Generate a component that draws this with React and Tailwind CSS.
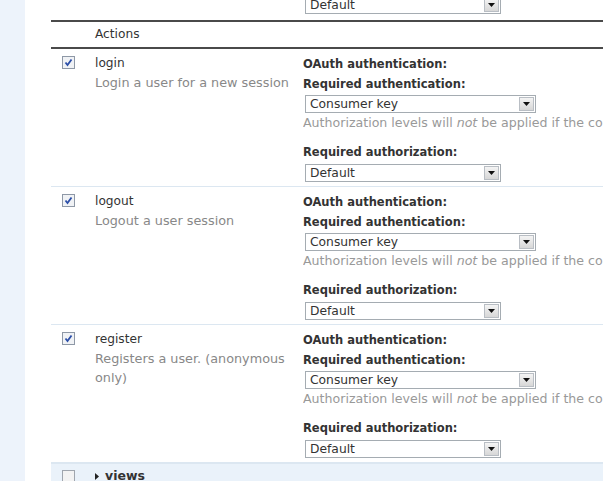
import React from "react";

function Check({ checked }) {
  return (
    <div className="w-[13px] h-[13px] border border-[#8e98a6] bg-[#f0f2f5] flex items-center justify-center">
      {checked && (
        <svg width="9" height="9" viewBox="0 0 9 9">
          <path d="M1.5 4.5 L3.5 7 L7.5 1.5" stroke="#2b4ea8" strokeWidth="1.8" fill="none" />
        </svg>
      )}
    </div>
  );
}

function Select({ value, w }) {
  return (
    <div className={`${w} h-[18px] border border-[#a5acb2] bg-white flex items-center justify-between`}>
      <span className="pl-[4px] text-[12.3px] text-[#333] leading-none">{value}</span>
      <div className="w-[15px] h-[14px] mr-[1px] border border-[#b9bec4] bg-gradient-to-b from-[#f4f4f4] to-[#d7d7d7] flex items-center justify-center">
        <svg width="7" height="4" viewBox="0 0 7 4">
          <path d="M0 0 H7 L3.5 4 Z" fill="#111" />
        </svg>
      </div>
    </div>
  );
}

function Row({ name, desc, last }) {
  return (
    <div className={`flex h-[138px] ${last ? "" : "border-b border-[#dce7f1]"}`}>
      <div className="w-[44px] pl-[11px] pt-[7px]">
        <Check checked />
      </div>
      <div className="w-[208px] pt-[5px]">
        <div className="text-[12.2px] text-[#333] leading-[19px]">{name}</div>
        <div className="text-[12.8px] text-[#888] leading-[19px] w-[205px]">{desc}</div>
      </div>
      <div className="flex-1 pt-[5px] whitespace-nowrap overflow-hidden">
        <div className="text-[11.5px] font-bold text-[#333] leading-[20px]">OAuth authentication:</div>
        <div className="text-[11.5px] font-bold text-[#333] leading-[20px]">Required authentication:</div>
        <div className="mt-[1px] ml-[2px]">
          <Select value="Consumer key" w="w-[231px]" />
        </div>
        <div className="text-[12.6px] text-[#999] leading-[18px] mt-[1px]">
          Authorization levels will <i>not</i> be applied if the consumer
        </div>
        <div className="text-[11.5px] font-bold text-[#333] leading-[20px] mt-[10px]">Required authorization:</div>
        <div className="mt-[2px] ml-[2px]">
          <Select value="Default" w="w-[196px]" />
        </div>
      </div>
    </div>
  );
}

export default function App() {
  return (
    <div
      className="w-[603px] h-[481px] overflow-hidden flex bg-white"
      style={{ fontFamily: '"DejaVu Sans", Verdana, sans-serif' }}
    >
      <div className="w-[25px] bg-[#edf3fb] shrink-0" />
      <div className="flex-1 pl-[26px] overflow-hidden">
        <div className="h-[20px] relative">
          <div className="absolute left-[254px] top-[-4px]">
            <Select value="Default" w="w-[196px]" />
          </div>
        </div>
        <div className="border-t-2 border-b-2 border-[#4a4a4a] h-[29px] flex items-center pl-[44px]">
          <span className="text-[12.2px] text-[#333]">Actions</span>
        </div>
        <Row name="login" desc="Login a user for a new session" />
        <Row name="logout" desc="Logout a user session" />
        <Row name="register" desc="Registers a user. (anonymous only)" />
        <div className="border-t border-[#dce7f1] bg-[#eaf2fa] h-[40px] flex pt-[6px]">
          <div className="w-[44px] pl-[11px]">
            <div className="w-[13px] h-[13px] border border-[#a0a6ae] bg-[#f3f3f3]" />
          </div>
          <div className="flex items-center gap-[6px] h-[13px]">
            <svg width="4" height="7" viewBox="0 0 4 7">
              <path d="M0 0 L4 3.5 L0 7 Z" fill="#222" />
            </svg>
            <span className="text-[12.5px] font-bold text-[#333]">views</span>
          </div>
        </div>
      </div>
    </div>
  );
}
